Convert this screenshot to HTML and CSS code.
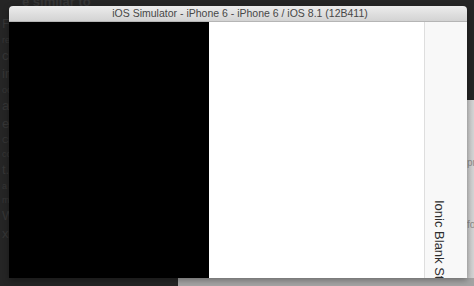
FILE: index.html
```html
<!DOCTYPE html>
<html>
<head>
<meta charset="utf-8">
<link rel="stylesheet" href="styles.css">
</head>
<body>
<div class="desktop">
  <div class="doc">
    <div class="doc-line big">e similar to</div>
    <div class="doc-line">F</div>
    <div class="doc-line small">re</div>
    <div class="doc-line">co</div>
    <div class="doc-line">im</div>
    <div class="doc-line small">oc</div>
    <div class="doc-line">av</div>
    <div class="doc-line">e</div>
    <div class="doc-line small">Cl</div>
    <div class="doc-line small">co</div>
    <div class="doc-line">t.</div>
    <div class="doc-line small">a</div>
    <div class="doc-line small">m</div>
    <div class="doc-line">W</div>
    <div class="doc-line">x.c</div>
  </div>
  <div class="side-panel">
    <span class="side-text t1">pr</span>
    <span class="side-text t2">fo</span>
  </div>
  <div class="bottom-strip"></div>

  <div class="window">
    <div class="titlebar">iOS Simulator - iPhone 6 - iPhone 6 / iOS 8.1 (12B411)</div>
    <div class="screen">
      <div class="pane-black"></div>
      <div class="pane-white"></div>
      <div class="navbar"><span class="nav-title">Ionic Blank Starter</span></div>
    </div>
  </div>
</div>
</body>
</html>
```

FILE: styles.css
```css
html, body {
  margin: 0;
  padding: 0;
}
body {
  width: 474px;
  height: 286px;
  overflow: hidden;
  background: #242424;
  font-family: "Liberation Sans", Arial, sans-serif;
}
.desktop {
  position: relative;
  width: 474px;
  height: 286px;
  overflow: hidden;
  background: #252525;
}
.doc {
  display: flex;
  flex-direction: column;
  gap: 6px;
  color: #363636;
  font-size: 13px;
}
.doc-line {
  line-height: 12px;
  white-space: nowrap;
  padding-left: 2px;
}
.doc-line.big {
  padding-left: 22px;
  font-weight: bold;
  margin-top: -4px;
  margin-bottom: 4px;
}
.doc-line.small {
  font-size: 9px;
  line-height: 8px;
}
.side-panel {
  position: absolute;
  left: 460px;
  top: 100px;
  width: 14px;
  height: 180px;
  background: linear-gradient(to right, #b9b9b9, #d4d4d4);
}
.side-text {
  position: absolute;
  left: 7px;
  font-size: 10px;
  color: #8a8a8a;
}
.t1 { top: 57px; }
.t2 { top: 119px; }
.bottom-strip {
  position: absolute;
  left: 178px;
  right: 0;
  bottom: 0;
  height: 8px;
  background: #a3a3a3;
}
.window {
  position: absolute;
  left: 9px;
  top: 6px;
  width: 458px;
  height: 272px;
  display: flex;
  flex-direction: column;
  border-radius: 4px 4px 0 0;
  overflow: hidden;
  box-shadow: 0 2px 6px rgba(0,0,0,0.35);
}
.titlebar {
  height: 16px;
  flex: none;
  background: linear-gradient(to bottom, #ececec, #d3d3d3);
  border-bottom: 1px solid #b5b5b5;
  box-sizing: border-box;
  color: #474747;
  font-size: 10.5px;
  line-height: 15px;
  text-align: center;
  white-space: nowrap;
  padding-left: 4px;
}
.screen {
  flex: 1;
  display: flex;
  min-height: 0;
}
.pane-black {
  width: 200px;
  background: #000;
}
.pane-white {
  width: 215px;
  background: #fff;
}
.nav-title {
  writing-mode: vertical-rl;
  font-size: 13px;
  color: #2d2d2d;
  white-space: nowrap;
}
.navbar {
  flex: 1;
  background: #f8f8f8;
  border-left: 1px solid #dedede;
  display: flex;
  justify-content: flex-start;
  padding-top: 178px;
  padding-left: 7px;
  overflow: hidden;
}
```
